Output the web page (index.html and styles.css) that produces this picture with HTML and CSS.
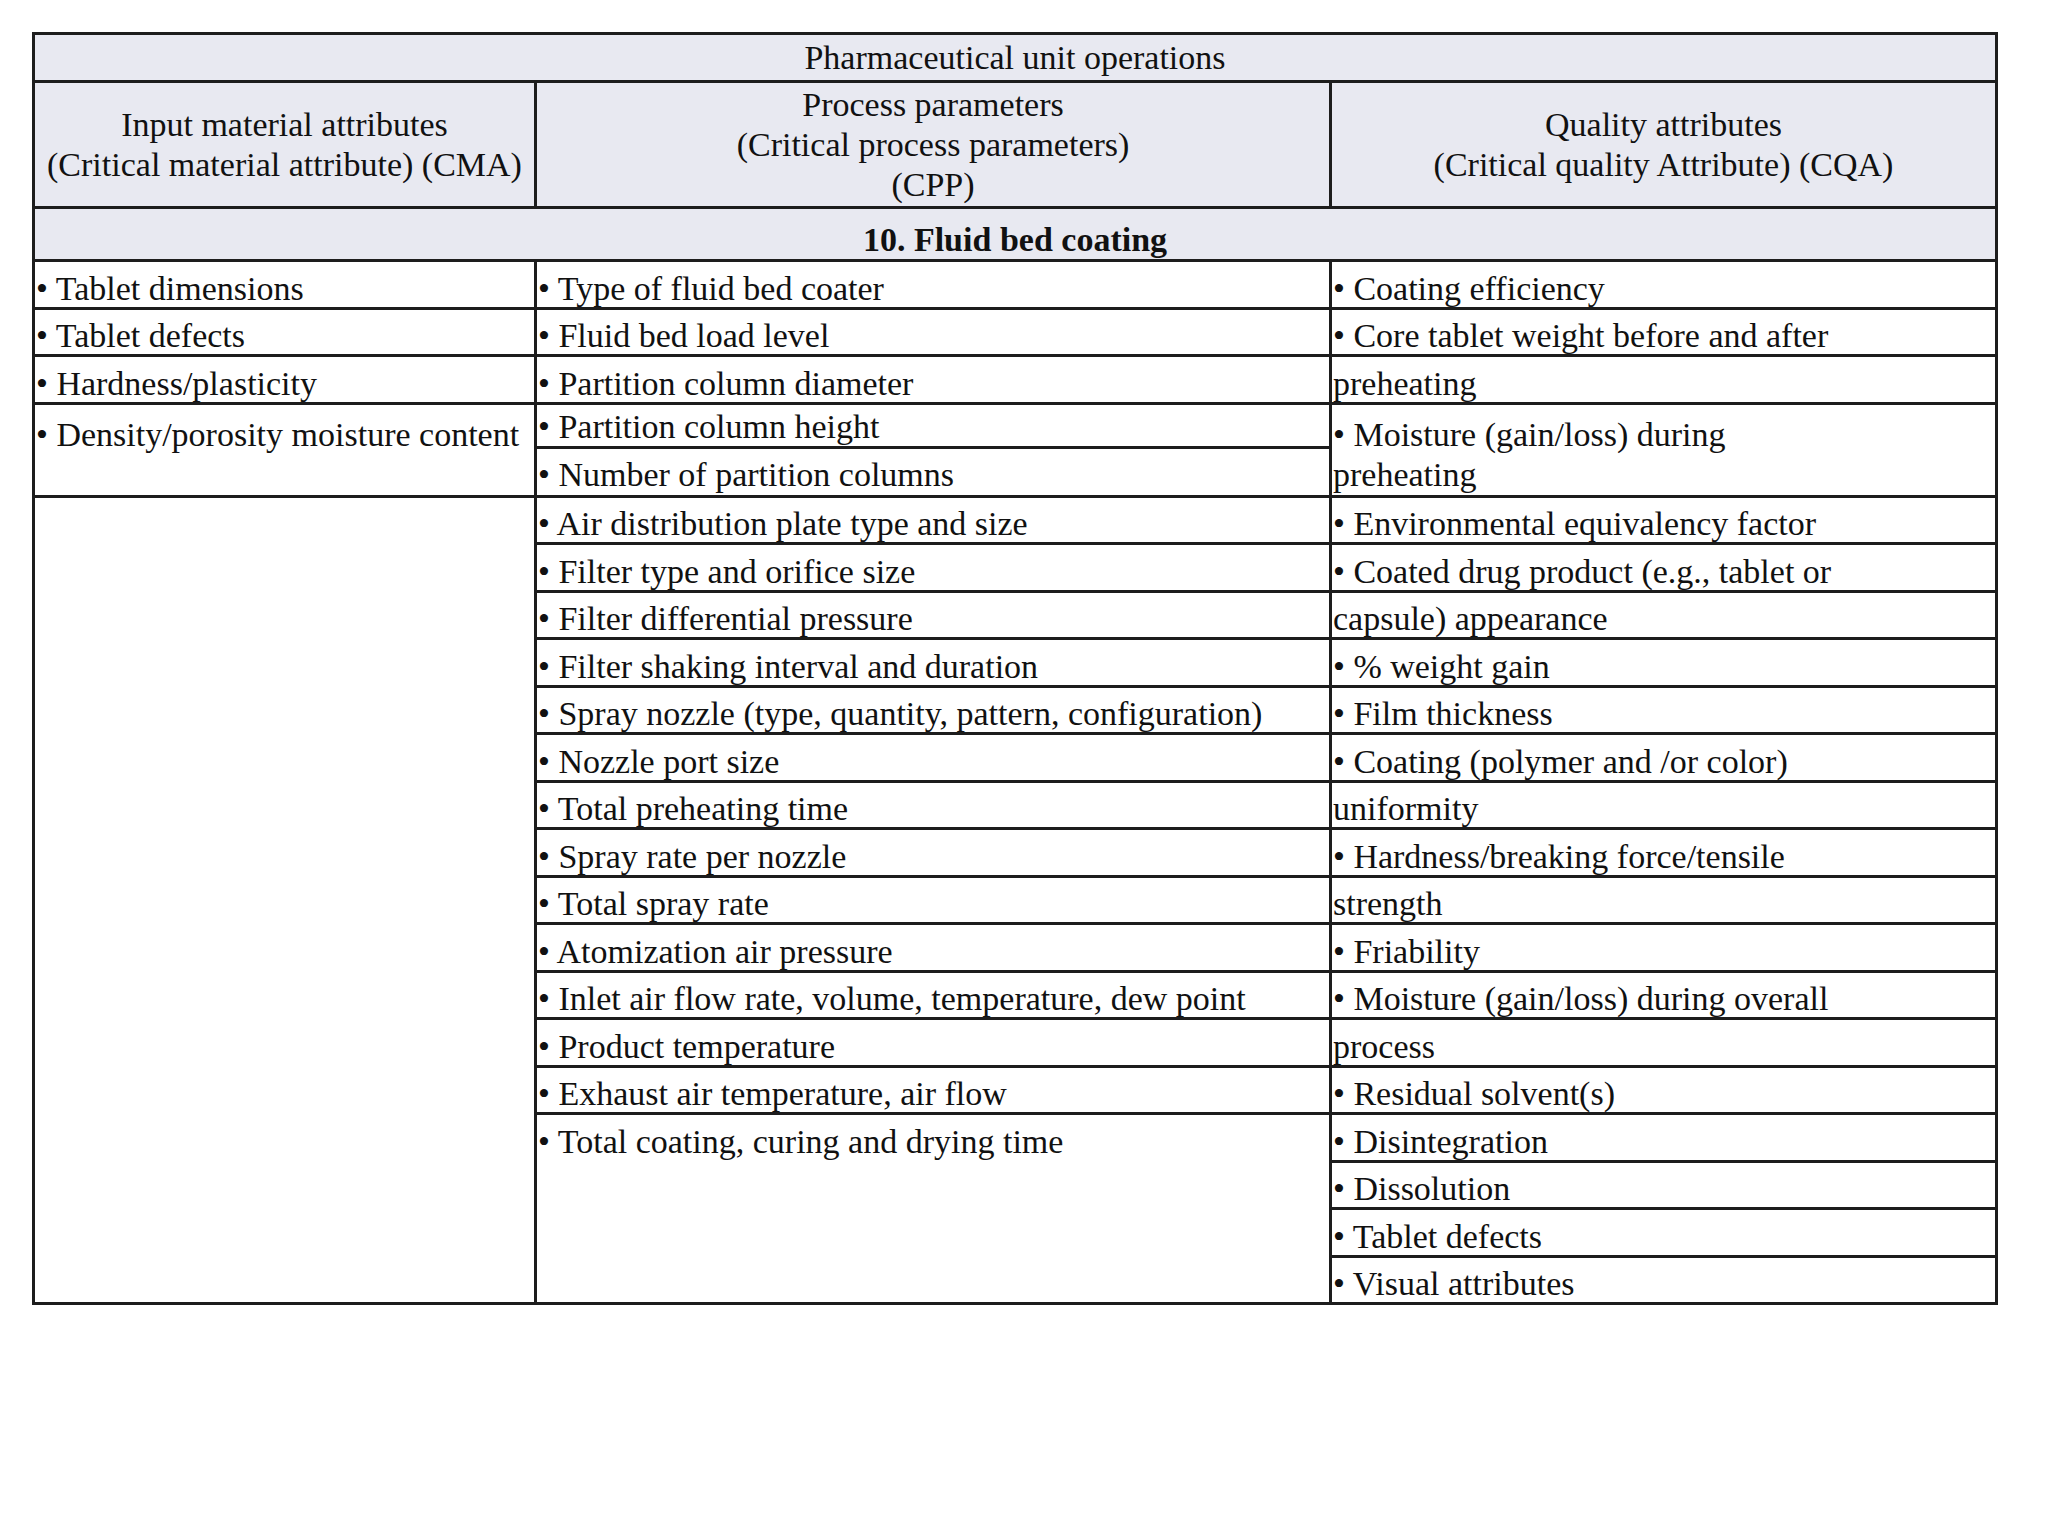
FILE: index.html
```html
<!DOCTYPE html>
<html lang="en">
<head>
<meta charset="utf-8">
<title>Fluid bed coating</title>
<link rel="stylesheet" href="styles.css">
</head>
<body>
<main class="page">
  <div class="sheet">
    <div class="head title">Pharmaceutical unit operations</div>
    <div class="head colhead">Input material attributes<br>(Critical material attribute) (CMA)</div>
    <div class="head colhead">Process parameters<br>(Critical process parameters)<br>(CPP)</div>
    <div class="head colhead">Quality attributes<br>(Critical quality Attribute) (CQA)</div>
    <div class="head section">10. Fluid bed coating</div>

    <div class="cell">• Tablet dimensions</div>
    <div class="cell">• Type of fluid bed coater</div>
    <div class="cell">• Coating efficiency</div>

    <div class="cell">• Tablet defects</div>
    <div class="cell">• Fluid bed load level</div>
    <div class="cell">• Core tablet weight before and after</div>

    <div class="cell">• Hardness/plasticity</div>
    <div class="cell">• Partition column diameter</div>
    <div class="cell">preheating</div>

    <div class="cell span-2 low">• Density/porosity moisture content</div>
    <div class="cell tight">• Partition column height</div>
    <div class="cell span-2 low">• Moisture (gain/loss) during<br>preheating</div>

    <div class="cell">• Number of partition columns</div>

    <div class="cell span-17"></div>
    <div class="cell">• Air distribution plate type and size</div>
    <div class="cell">• Environmental equivalency factor</div>

    <div class="cell">• Filter type and orifice size</div>
    <div class="cell">• Coated drug product (e.g., tablet or</div>

    <div class="cell">• Filter differential pressure</div>
    <div class="cell">capsule) appearance</div>

    <div class="cell">• Filter shaking interval and duration</div>
    <div class="cell">• % weight gain</div>

    <div class="cell">• Spray nozzle (type, quantity, pattern, configuration)</div>
    <div class="cell">• Film thickness</div>

    <div class="cell">• Nozzle port size</div>
    <div class="cell">• Coating (polymer and /or color)</div>

    <div class="cell">• Total preheating time</div>
    <div class="cell">uniformity</div>

    <div class="cell">• Spray rate per nozzle</div>
    <div class="cell">• Hardness/breaking force/tensile</div>

    <div class="cell">• Total spray rate</div>
    <div class="cell">strength</div>

    <div class="cell">• Atomization air pressure</div>
    <div class="cell">• Friability</div>

    <div class="cell">• Inlet air flow rate, volume, temperature, dew point</div>
    <div class="cell">• Moisture (gain/loss) during overall</div>

    <div class="cell">• Product temperature</div>
    <div class="cell">process</div>

    <div class="cell">• Exhaust air temperature, air flow</div>
    <div class="cell">• Residual solvent(s)</div>

    <div class="cell span-4">• Total coating, curing and drying time</div>
    <div class="cell">• Disintegration</div>

    <div class="cell">• Dissolution</div>
    <div class="cell">• Tablet defects</div>
    <div class="cell">• Visual attributes</div>
  </div>
</main>
</body>
</html>
```

FILE: styles.css
```css
html, body {
  margin: 0;
  padding: 0;
  background: #ffffff;
}

.page {
  padding: 32px 0 0 32px;
  font-family: "Liberation Serif", "Times New Roman", serif;
  font-size: 34px;
  color: #111111;
}

.sheet {
  display: grid;
  width: max-content;
  grid-template-columns: 499px 792px 663px;
  grid-template-rows:
    45px 123px 50px
    repeat(3, 44.5px)
    41px 46px
    repeat(17, 44.5px);
  gap: 3px;
  padding: 3px;
  background: #1d1d1d;
}

.head {
  background: #e8e9f1;
  line-height: 40px;
  text-align: center;
  white-space: nowrap;
}

.title {
  grid-column: 1 / -1;
  padding-top: 3px;
}

.colhead {
  display: flex;
  flex-direction: column;
  justify-content: center;
  align-items: center;
}

.section {
  grid-column: 1 / -1;
  font-weight: 700;
  padding-top: 11px;
}

.cell {
  background: #ffffff;
  line-height: 40px;
  padding: 6.5px 0 0 1px;
  white-space: nowrap;
}

.cell.tight {
  padding-top: 2px;
}

.cell.low {
  padding-top: 10.5px;
}

.span-2 {
  grid-row: span 2;
}

.span-4 {
  grid-row: span 4;
}

.span-17 {
  grid-row: span 17;
}
```
